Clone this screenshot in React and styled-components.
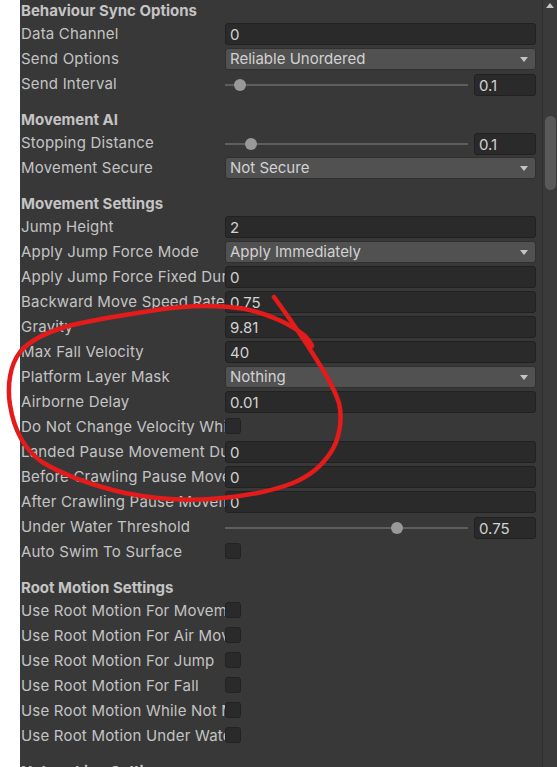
import React from "react";
import styled, { createGlobalStyle } from "styled-components";

const GlobalStyle = createGlobalStyle`
  html, body {
    margin: 0;
    padding: 0;
    background: #ffffff;
    overflow: hidden;
  }
  * {
    box-sizing: border-box;
  }
`;

const Page = styled.div`
  position: relative;
  display: flex;
  width: 557px;
  height: 767px;
  overflow: hidden;
  font-family: Inter, "Noto Sans", sans-serif;
  font-size: 15px;
  color: #c4c4c4;
`;

const Gutter = styled.div`
  width: 20px;
  flex: none;
  background: #ffffff;
`;

const Inspector = styled.div`
  flex: 1;
  background: #383838;
  padding: 1px 6px 0 1px;
  display: flex;
  flex-direction: column;
`;

const ScrollTrack = styled.div`
  width: 15px;
  flex: none;
  background: #3a3a3a;
  border-left: 1px solid #2e2e2e;
  display: flex;
  flex-direction: column;
  align-items: center;
`;

const ScrollArrow = styled.div`
  margin-top: 3px;
  width: 0;
  height: 0;
  border-left: 4px solid transparent;
  border-right: 4px solid transparent;
  border-bottom: 5px solid #c4c4c4;
`;

const ScrollThumb = styled.div`
  margin-top: 108px;
  width: 11px;
  height: 74px;
  border-radius: 6px;
  background: #595959;
`;

const Header = styled.div`
  height: 20px;
  line-height: 20px;
  font-weight: 700;
  margin-top: ${(p) => (p.$first ? "0" : "14px")};
  white-space: nowrap;
`;

const Row = styled.div`
  height: 25px;
  display: grid;
  grid-template-columns: 204px 1fr;
`;

const Label = styled.div`
  line-height: 26px;
  white-space: nowrap;
  overflow: hidden;
  padding-right: 2px;
  letter-spacing: 0.2px;
`;

const Field = styled.div`
  height: 22px;
  margin-top: 2px;
  border-radius: 3px;
  padding: 0 4px;
  line-height: 22px;
  color: #d2d2d2;
  white-space: nowrap;
  overflow: hidden;
`;

const TextField = styled(Field)`
  background: #2a2a2a;
  border: 1px solid #212121;
  line-height: 21px;
`;

const Dropdown = styled(Field)`
  background: #515151;
  border: 1px solid #303030;
  line-height: 20px;
  display: flex;
  align-items: center;
  justify-content: space-between;
  padding-right: 7px;
`;

const Caret = styled.span`
  width: 0;
  height: 0;
  border-left: 4.5px solid transparent;
  border-right: 4.5px solid transparent;
  border-top: 5px solid #c4c4c4;
`;

const SliderWrap = styled.div`
  display: flex;
  align-items: center;
  gap: 6px;
`;

const Track = styled.div`
  position: relative;
  flex: 1;
  height: 2px;
  margin-top: 2px;
  background: #5e5e5e;
`;

const Knob = styled.div`
  position: absolute;
  top: -5px;
  width: 12px;
  height: 12px;
  border-radius: 50%;
  background: #999999;
`;

const SliderValue = styled(TextField)`
  width: 62px;
  flex: none;
`;

const CheckBox = styled.div`
  width: 16px;
  height: 16px;
  margin-top: 4px;
  border-radius: 3px;
  background: #2a2a2a;
  border: 1px solid #222222;
`;

const Scribble = styled.svg`
  position: absolute;
  top: 0;
  left: 0;
  pointer-events: none;
`;

const Slider = ({ value, frac }) => (
  <SliderWrap>
    <Track>
      <Knob style={{ left: `calc(${frac * 100}% - ${frac * 12}px)` }} />
    </Track>
    <SliderValue>{value}</SliderValue>
  </SliderWrap>
);

const renderControl = (f) => {
  if (f.type === "text") return <TextField>{f.value}</TextField>;
  if (f.type === "drop")
    return (
      <Dropdown>
        <span>{f.value}</span>
        <Caret />
      </Dropdown>
    );
  if (f.type === "slider") return <Slider value={f.value} frac={f.frac} />;
  return <div><CheckBox /></div>;
};

const groups = [
  {
    title: "Behaviour Sync Options",
    fields: [
      { label: "Data Channel", type: "text", value: "0" },
      { label: "Send Options", type: "drop", value: "Reliable Unordered" },
      { label: "Send Interval", type: "slider", value: "0.1", frac: 0.04 },
    ],
  },
  {
    title: "Movement AI",
    fields: [
      { label: "Stopping Distance", type: "slider", value: "0.1", frac: 0.087 },
      { label: "Movement Secure", type: "drop", value: "Not Secure" },
    ],
  },
  {
    title: "Movement Settings",
    fields: [
      { label: "Jump Height", type: "text", value: "2" },
      { label: "Apply Jump Force Mode", type: "drop", value: "Apply Immediately" },
      { label: "Apply Jump Force Fixed Duration", type: "text", value: "0" },
      { label: "Backward Move Speed Rate", type: "text", value: "0.75" },
      { label: "Gravity", type: "text", value: "9.81" },
      { label: "Max Fall Velocity", type: "text", value: "40" },
      { label: "Platform Layer Mask", type: "drop", value: "Nothing" },
      { label: "Airborne Delay", type: "text", value: "0.01" },
      { label: "Do Not Change Velocity While Airborne", type: "check" },
      { label: "Landed Pause Movement Duration", type: "text", value: "0" },
      { label: "Before Crawling Pause Movement Duration", type: "text", value: "0" },
      { label: "After Crawling Pause Movement Duration", type: "text", value: "0" },
      { label: "Under Water Threshold", type: "slider", value: "0.75", frac: 0.72 },
      { label: "Auto Swim To Surface", type: "check" },
    ],
  },
  {
    title: "Root Motion Settings",
    fields: [
      { label: "Use Root Motion For Movement", type: "check" },
      { label: "Use Root Motion For Air Movement", type: "check" },
      { label: "Use Root Motion For Jump", type: "check" },
      { label: "Use Root Motion For Fall", type: "check" },
      { label: "Use Root Motion While Not Moving", type: "check" },
      { label: "Use Root Motion Under Water", type: "check" },
    ],
  },
  { title: "Networking Settings", fields: [] },
];

// hand-drawn annotation loop, starts with the tick at the top right
const scribblePath =
  "M274 297 C285 312 296 328 306 343 C318 362 332 382 339 403 C343 420 339 440 331 452 " +
  "C322 466 310 476 293 483 C270 492 240 497 210 499 C180 501 150 498 125 493 " +
  "C95 486 65 476 42 462 C25 450 14 430 10 405 C7 385 10 365 20 352 " +
  "C30 340 45 333 65 327 C90 320 120 316 150 311 C180 306 215 304 245 309 " +
  "C270 314 292 325 305 336 C309 340 311 343 312 346";

const App = () => (
  <Page>
    <GlobalStyle />
    <Gutter />
    <Inspector>
      {groups.map((g, gi) => (
        <React.Fragment key={g.title}>
          <Header $first={gi === 0}>{g.title}</Header>
          {g.fields.map((f) => (
            <Row key={f.label}>
              <Label>{f.label}</Label>
              {renderControl(f)}
            </Row>
          ))}
        </React.Fragment>
      ))}
    </Inspector>
    <ScrollTrack>
      <ScrollArrow />
      <ScrollThumb />
    </ScrollTrack>
    <Scribble width="557" height="767" viewBox="0 0 557 767">
      <path
        d={scribblePath}
        fill="none"
        stroke="#e31b1b"
        strokeWidth="4.5"
        strokeLinecap="round"
        strokeLinejoin="round"
      />
    </Scribble>
  </Page>
);

export default App;
